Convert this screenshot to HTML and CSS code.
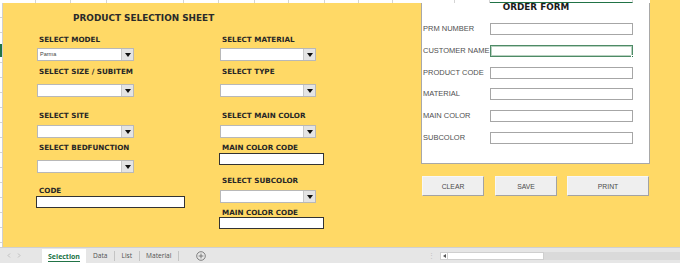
FILE: index.html
```html
<!DOCTYPE html>
<html>
<head>
<meta charset="utf-8">
<title>Product Selection Sheet</title>
<link rel="stylesheet" href="styles.css">
</head>
<body>
<div class="colheads">
  <div></div><div></div><div></div><div></div><div></div><div></div><div></div>
  <div></div><div></div><div></div><div></div><div></div><div class="sel"></div><div class="last"></div>
</div>
<div class="main">
  <div class="rowheads"><div class="rowsel"></div></div>

  <div class="left">
    <div class="title">PRODUCT SELECTION SHEET</div>
    <div class="cols">
      <div class="col col1">
        <div class="lbl">SELECT MODEL</div>
        <div class="dd"><span class="val">Parma</span><span class="btn"><svg width="6" height="4" viewBox="0 0 6 4"><polygon points="0,0 6,0 3,4" fill="#111"/></svg></span></div>
        <div class="lbl">SELECT SIZE / SUBITEM</div>
        <div class="dd"><span class="val"></span><span class="btn"><svg width="6" height="4" viewBox="0 0 6 4"><polygon points="0,0 6,0 3,4" fill="#111"/></svg></span></div>
        <div class="lbl">SELECT SITE</div>
        <div class="dd"><span class="val"></span><span class="btn"><svg width="6" height="4" viewBox="0 0 6 4"><polygon points="0,0 6,0 3,4" fill="#111"/></svg></span></div>
        <div class="lbl">SELECT BEDFUNCTION</div>
        <div class="dd"><span class="val"></span><span class="btn"><svg width="6" height="4" viewBox="0 0 6 4"><polygon points="0,0 6,0 3,4" fill="#111"/></svg></span></div>
        <div class="lbl">CODE</div>
        <div class="codebox"></div>
      </div>
      <div class="col col2">
        <div class="lbl">SELECT MATERIAL</div>
        <div class="dd"><span class="val"></span><span class="btn"><svg width="6" height="4" viewBox="0 0 6 4"><polygon points="0,0 6,0 3,4" fill="#111"/></svg></span></div>
        <div class="lbl">SELECT TYPE</div>
        <div class="dd"><span class="val"></span><span class="btn"><svg width="6" height="4" viewBox="0 0 6 4"><polygon points="0,0 6,0 3,4" fill="#111"/></svg></span></div>
        <div class="lbl">SELECT MAIN COLOR</div>
        <div class="dd"><span class="val"></span><span class="btn"><svg width="6" height="4" viewBox="0 0 6 4"><polygon points="0,0 6,0 3,4" fill="#111"/></svg></span></div>
        <div class="lbl">MAIN COLOR CODE</div>
        <div class="codebox"></div>
        <div class="lbl">SELECT SUBCOLOR</div>
        <div class="dd"><span class="val"></span><span class="btn"><svg width="6" height="4" viewBox="0 0 6 4"><polygon points="0,0 6,0 3,4" fill="#111"/></svg></span></div>
        <div class="lbl">MAIN COLOR CODE</div>
        <div class="codebox"></div>
      </div>
    </div>
  </div>

  <div class="right">
    <div class="order">
      <div class="otitle">ORDER FORM</div>
      <div class="form">
        <div class="flabel">PRM NUMBER</div><div class="tbox"></div>
        <div class="flabel">CUSTOMER NAME</div><div class="tbox active"><span class="handle"></span></div>
        <div class="flabel">PRODUCT CODE</div><div class="tbox"></div>
        <div class="flabel">MATERIAL</div><div class="tbox"></div>
        <div class="flabel">MAIN COLOR</div><div class="tbox"></div>
        <div class="flabel">SUBCOLOR</div><div class="tbox"></div>
      </div>
    </div>
    <div class="buttons">
      <div class="b clear">CLEAR</div>
      <div class="b save">SAVE</div>
      <div class="b print">PRINT</div>
    </div>
  </div>
</div>

<div class="tabbar">
  <div class="sheets">
    <div class="nav">
      <svg width="4" height="5" viewBox="0 0 4 5"><polyline points="3,0.5 1,2.5 3,4.5" fill="none" stroke="#b5b5b5" stroke-width="0.8"/></svg>
      <svg width="4" height="5" viewBox="0 0 4 5"><polyline points="1,0.5 3,2.5 1,4.5" fill="none" stroke="#b5b5b5" stroke-width="0.8"/></svg>
    </div>
    <div class="tab active"><span>Selection</span></div>
    <div class="tab">Data</div>
    <div class="tab">List</div>
    <div class="tab">Material</div>
    <div class="plus"><svg width="10" height="10" viewBox="0 0 10 10"><circle cx="5" cy="5" r="4.3" fill="none" stroke="#666" stroke-width="0.8"/><line x1="5" y1="2.6" x2="5" y2="7.4" stroke="#666" stroke-width="0.8"/><line x1="2.6" y1="5" x2="7.4" y2="5" stroke="#666" stroke-width="0.8"/></svg></div>
  </div>
  <div class="hscroll">
    <span class="grip">&#8942;</span>
    <span class="sbtn"><svg width="3" height="4" viewBox="0 0 3 4"><polygon points="3,0 0,2 3,4" fill="#555"/></svg></span>
    <span class="thumb"></span>
    <span class="track"></span>
  </div>
</div>
</body>
</html>
```

FILE: styles.css
```css
* { box-sizing: border-box; margin: 0; padding: 0; }

body {
  width: 680px;
  height: 263px;
  overflow: hidden;
  background: #ffd966;
  font-family: "DejaVu Sans", sans-serif;
  color: #1f1f1f;
}

/* spreadsheet column header remnants */
.colheads {
  display: grid;
  grid-template-columns: 36px 35px 36px 77px 35px 36px 34px 36px 34px 34px 62px 35px 143px 17px;
  width: 650px;
  height: 3px;
  background: #fff;
}
.colheads > div { border-right: 1px solid #d4d4d4; }
.colheads > .sel { border-bottom: 1px solid #217346; }
.colheads > .last { border-right: none; }

.main {
  display: flex;
  height: 244px;
}

.rowheads {
  width: 3px;
  flex: none;
  background: #fff repeating-linear-gradient(to bottom, transparent 0 14px, #d4d4d4 14px 15px);
  border-right: 1px solid #d0d0d0;
}
.rowsel {
  width: 2px;
  height: 13px;
  margin-top: 41px;
  background: #217346;
}

/* left selection sheet */
.left {
  width: 418px;
  flex: none;
  padding: 10px 0 0 33px;
}
.title {
  font-weight: bold;
  font-size: 8.9px;
  line-height: 10px;
  height: 10px;
  margin-left: 37px;
  color: #2a2a2a;
}
.cols {
  display: flex;
  gap: 34px;
  margin-top: 13px;
}
.col { display: flex; flex-direction: column; }
.col1 { width: 149px; }
.col2 { width: 105px; }

.lbl {
  font-weight: bold;
  font-size: 7.2px;
  line-height: 8px;
  height: 8px;
  padding-left: 3px;
  white-space: nowrap;
  color: #262626;
}
.dd {
  display: flex;
  height: 13px;
  margin-left: 1px;
  background: #fff;
  border: 1px solid #b8b8b8;
}
.col1 .dd { width: 97px; }
.col2 .dd { width: 96px; }
.dd .val {
  flex: 1;
  font-family: "Liberation Sans", sans-serif;
  font-size: 5.5px;
  line-height: 11px;
  padding-left: 2px;
  color: #444;
}
.dd .btn {
  width: 12px;
  display: flex;
  align-items: center;
  justify-content: center;
  background: #e4e4e4;
  border-left: 1px solid #c8c8c8;
}
.codebox {
  height: 12px;
  background: #fff;
  border: 1px solid #333;
}

/* vertical rhythm of the left columns */
.col > :nth-child(2) { margin-top: 4px; }
.col > :nth-child(3) { margin-top: 7px; }
.col > :nth-child(4) { margin-top: 8px; }
.col > :nth-child(5) { margin-top: 15px; }
.col > :nth-child(6) { margin-top: 5px; }
.col > :nth-child(7) { margin-top: 6px; }
.col1 > :nth-child(8) { margin-top: 8px; }
.col1 > :nth-child(9) { margin-top: 14px; }
.col1 > :nth-child(10) { margin-top: 1px; }
.col2 > :nth-child(8) { margin-top: 1px; }
.col2 > :nth-child(9) { margin-top: 12px; }
.col2 > :nth-child(10) { margin-top: 5px; }
.col2 > :nth-child(11) { margin-top: 6px; }
.col2 > :nth-child(12) { margin-top: 0; }

/* order form */
.right {
  width: 229px;
  flex: none;
}
.order {
  height: 161px;
  background: #fff;
  border: 1px solid #a8a8a8;
  border-top: none;
  padding-left: 1px;
}
.otitle {
  font-weight: bold;
  font-size: 8.8px;
  line-height: 8px;
  height: 8px;
  text-align: center;
  color: #1a1a1a;
}
.form {
  display: grid;
  grid-template-columns: 67px 143px;
  grid-auto-rows: 21.75px;
  align-items: start;
  margin-top: 12px;
}
.flabel {
  font-family: "Liberation Sans", sans-serif;
  font-size: 7.5px;
  line-height: 12px;
  color: #505050;
  white-space: nowrap;
}
.tbox {
  height: 12px;
  background: #fff;
  border: 1px solid #a6a6a6;
}
.tbox.active {
  position: relative;
  border: 1px solid #4d8a66;
  box-shadow: inset 0 0 0 1px #b9d2c1;
}
.handle {
  position: absolute;
  right: -2px;
  bottom: -2px;
  width: 3px;
  height: 3px;
  background: #217346;
  border: 0.5px solid #fff;
}

.buttons {
  display: flex;
  margin-top: 12px;
  padding-left: 1px;
}
.b {
  height: 20px;
  display: flex;
  align-items: center;
  justify-content: center;
  background: #efefef;
  border-top: 1px solid #f7f7f7;
  border-left: 1px solid #f7f7f7;
  border-right: 1px solid #a3a3a3;
  border-bottom: 1px solid #a3a3a3;
  font-family: "Liberation Sans", sans-serif;
  font-size: 6.8px;
  color: #4a4a4a;
}
.clear { width: 62px; }
.save { width: 62px; margin-left: 11px; }
.print { width: 82px; margin-left: 10px; }

/* sheet tabs bar */
.tabbar {
  display: flex;
  height: 16px;
  background: #e6e6e6;
  border-top: 1px solid #d0d0d0;
  font-family: "Open Sans", sans-serif;
  font-size: 6.6px;
  color: #505050;
}
.sheets {
  width: 428px;
  display: flex;
  align-items: center;
}
.nav {
  width: 42px;
  display: flex;
  gap: 6px;
  padding-left: 7px;
  align-self: center;
}
.tab {
  line-height: 10px;
  padding: 0 7px 0 6px;
  border-right: 1px solid #c4c4c4;
}
.tab.active {
  align-self: stretch;
  margin-top: 1px;
  width: 44px;
  padding: 0;
  border-right: none;
  background: #fff;
  display: flex;
  align-items: center;
  justify-content: center;
  font-weight: bold;
  font-size: 7px;
  color: #217346;
}
.tab.active + .tab { padding-left: 7px; }
.tab.active span {
  line-height: 9px;
  margin-top: 2px;
  border-bottom: 1.5px solid #217346;
}
.plus {
  margin-left: 17px;
  display: flex;
  align-items: center;
}
.hscroll {
  flex: 1;
  display: flex;
  align-items: center;
}
.grip {
  width: 12px;
  color: #c2c2c2;
  font-size: 7px;
  line-height: 8px;
}
.sbtn {
  width: 8px;
  height: 8px;
  display: flex;
  align-items: center;
  justify-content: center;
  background: #fff;
  border: 1px solid #cfcfcf;
}
.thumb {
  width: 96px;
  height: 8px;
  background: #fff;
  border: 1px solid #cfcfcf;
  border-left: none;
}
.track {
  flex: 1;
  height: 8px;
  background: #dadada;
}
```
